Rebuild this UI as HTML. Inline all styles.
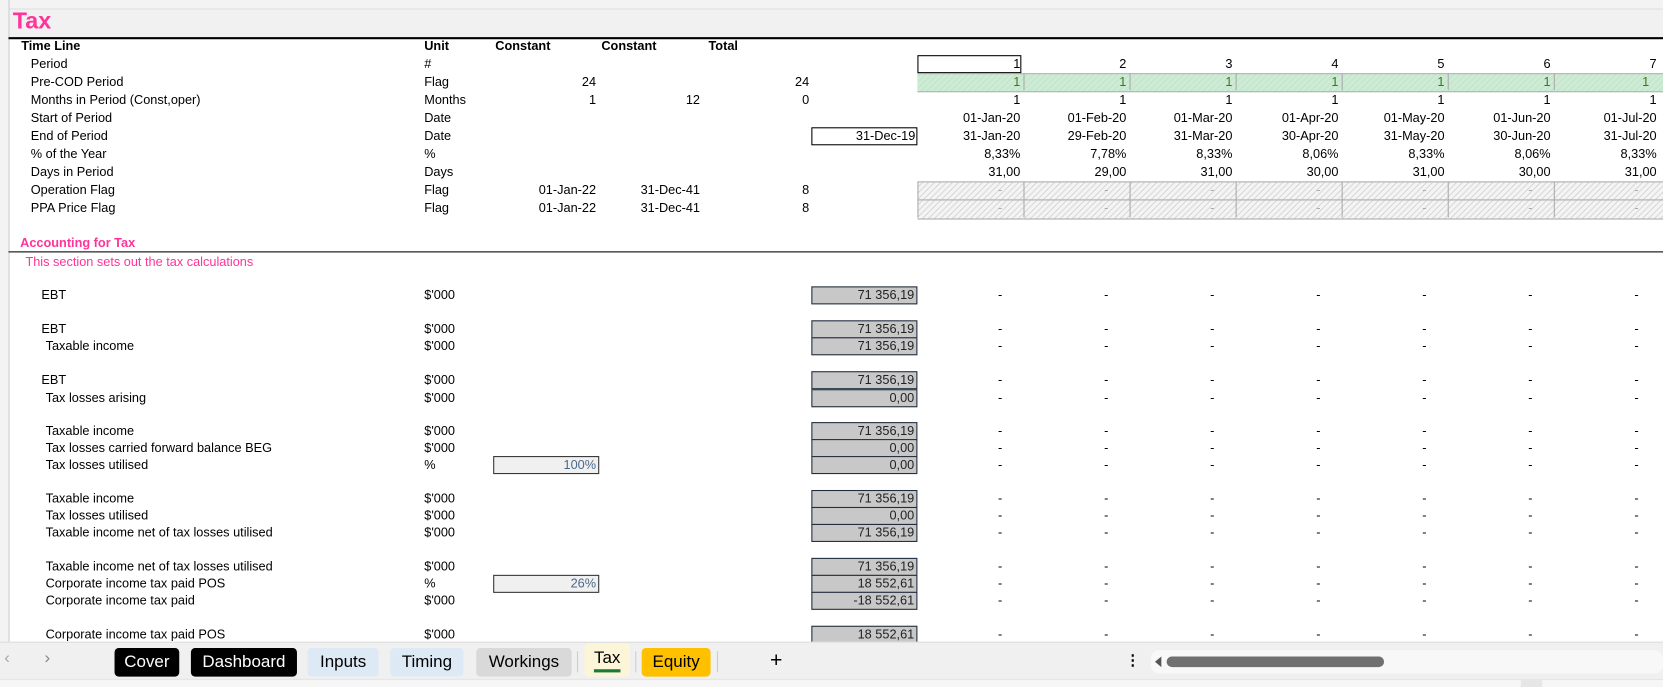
<!DOCTYPE html>
<html><head><meta charset="utf-8"><style>
html,body{margin:0;padding:0;overflow:hidden;width:1663px;height:687px;background:#fff}
#w{position:absolute;left:0;top:0;width:1568px;height:648px;transform:scale(1.06059);transform-origin:0 0;font-family:"Liberation Sans",Arial,sans-serif;font-size:12px;color:#000;overflow:hidden;background:#fff}
.a{position:absolute;white-space:nowrap}
.r{position:absolute;left:0;width:1568px;height:16px;line-height:16px}
.r span{position:absolute;top:0;height:16px;white-space:nowrap}
.l{left:29px}.l2{left:43px}.l1{left:39px}
.u{left:400px}
.c1{left:465px;width:97px;text-align:right}
.c2{left:565px;width:95px;text-align:right}
.t{left:665px;width:98px;text-align:right}
.bx{left:765px;width:96px;text-align:right;padding-right:2px;background:#c8c8c8;border:1px solid #1f2d3d;height:15px!important;line-height:15px;top:0;color:#222}
.ib{left:465px;width:96px;text-align:right;padding-right:2px;background:#f0f0f0;border:1px solid #333;height:15px!important;line-height:15px;color:#4a6a8a}
.p{width:97px;text-align:right}
.d{width:80px;text-align:right}
.pink{color:#ff3399}
</style></head><body><div id="w">
<div class="a" style="left:0;top:0;width:1568px;height:8px;background:#f3f3f3;border-bottom:1px solid #ddd"></div>
<div class="a" style="left:0;top:0;width:8px;height:605px;background:#f3f3f3;border-right:1px solid #ccc"></div>
<div class="a" style="left:9px;top:9px;width:1559px;height:26px;background:#f1f1f1"></div>
<div class="a pink" style="left:12px;top:7px;font-size:22px;font-weight:bold;line-height:26px">Tax</div>
<div class="a" style="left:8px;top:35px;width:1560px;height:2px;background:#000"></div>

<div class="r" style="top:35px;font-weight:bold"><span style="left:20px">Time Line</span><span class="u">Unit</span><span style="left:467px">Constant</span><span style="left:567px">Constant</span><span style="left:668px">Total</span></div>
<div class="r" style="top:52px"><span class="l">Period</span><span class="u">#</span>
<span class="p" style="left:865px;width:97px;border:1px solid #000;height:15px;line-height:15px;top:0;width:96px">1</span><span class="p" style="left:965px">2</span><span class="p" style="left:1065px">3</span><span class="p" style="left:1165px">4</span><span class="p" style="left:1265px">5</span><span class="p" style="left:1365px">6</span><span class="p" style="left:1465px">7</span></div>
<div class="a" style="left:865px;top:69px;width:703px;height:16px;background:repeating-linear-gradient(135deg,#c6e8cf 0 3px,#d4eed9 3px 4px);border-top:1px solid #aaa;border-bottom:1px solid #aaa"></div>
<div class="r" style="top:69px"><span class="l">Pre-COD Period</span><span class="u">Flag</span><span class="c1">24</span><span class="t">24</span>
<span class="p" style="left:865px;color:#3a7a1a;border-right:1px solid #aaa;width:97px;padding-right:3px">1</span><span class="p" style="left:965px;color:#3a7a1a;border-right:1px solid #aaa;width:97px;padding-right:3px">1</span><span class="p" style="left:1065px;color:#3a7a1a;border-right:1px solid #aaa;width:97px;padding-right:3px">1</span><span class="p" style="left:1165px;color:#3a7a1a;border-right:1px solid #aaa;width:97px;padding-right:3px">1</span><span class="p" style="left:1265px;color:#3a7a1a;border-right:1px solid #aaa;width:97px;padding-right:3px">1</span><span class="p" style="left:1365px;color:#3a7a1a;border-right:1px solid #aaa;width:97px;padding-right:3px">1</span><span class="p" style="left:1465px;color:#3a7a1a;width:90px">1</span></div>
<div class="r" style="top:86px"><span class="l">Months in Period (Const,oper)</span><span class="u">Months</span><span class="c1">1</span><span class="c2">12</span><span class="t">0</span>
<span class="p" style="left:865px">1</span><span class="p" style="left:965px">1</span><span class="p" style="left:1065px">1</span><span class="p" style="left:1165px">1</span><span class="p" style="left:1265px">1</span><span class="p" style="left:1365px">1</span><span class="p" style="left:1465px">1</span></div>
<div class="r" style="top:103px"><span class="l">Start of Period</span><span class="u">Date</span>
<span class="p" style="left:865px">01-Jan-20</span><span class="p" style="left:965px">01-Feb-20</span><span class="p" style="left:1065px">01-Mar-20</span><span class="p" style="left:1165px">01-Apr-20</span><span class="p" style="left:1265px">01-May-20</span><span class="p" style="left:1365px">01-Jun-20</span><span class="p" style="left:1465px">01-Jul-20</span></div>
<div class="r" style="top:120px"><span class="l">End of Period</span><span class="u">Date</span><span style="left:765px;width:97px;text-align:right;border:1px solid #000;height:15px;line-height:15px;padding-right:1px">31-Dec-19</span>
<span class="p" style="left:865px">31-Jan-20</span><span class="p" style="left:965px">29-Feb-20</span><span class="p" style="left:1065px">31-Mar-20</span><span class="p" style="left:1165px">30-Apr-20</span><span class="p" style="left:1265px">31-May-20</span><span class="p" style="left:1365px">30-Jun-20</span><span class="p" style="left:1465px">31-Jul-20</span></div>
<div class="r" style="top:137px"><span class="l">% of the Year</span><span class="u">%</span>
<span class="p" style="left:865px">8,33%</span><span class="p" style="left:965px">7,78%</span><span class="p" style="left:1065px">8,33%</span><span class="p" style="left:1165px">8,06%</span><span class="p" style="left:1265px">8,33%</span><span class="p" style="left:1365px">8,06%</span><span class="p" style="left:1465px">8,33%</span></div>
<div class="r" style="top:154px"><span class="l">Days in Period</span><span class="u">Days</span>
<span class="p" style="left:865px">31,00</span><span class="p" style="left:965px">29,00</span><span class="p" style="left:1065px">31,00</span><span class="p" style="left:1165px">30,00</span><span class="p" style="left:1265px">31,00</span><span class="p" style="left:1365px">30,00</span><span class="p" style="left:1465px">31,00</span></div>
<div class="a" style="left:865px;top:171px;width:703px;height:34px;background:repeating-linear-gradient(135deg,#f4f4f4 0 3px,#d8d8d8 3px 4px);border-top:1px solid #aaa;border-bottom:1px solid #aaa"></div>
<div class="a" style="left:865px;top:188px;width:703px;height:1px;background:#aaa"></div>
<div class="a" style="left:965px;top:171px;width:1px;height:34px;background:#aaa"></div><div class="a" style="left:1065px;top:171px;width:1px;height:34px;background:#aaa"></div><div class="a" style="left:1165px;top:171px;width:1px;height:34px;background:#aaa"></div><div class="a" style="left:1265px;top:171px;width:1px;height:34px;background:#aaa"></div><div class="a" style="left:1365px;top:171px;width:1px;height:34px;background:#aaa"></div><div class="a" style="left:1465px;top:171px;width:1px;height:34px;background:#aaa"></div><div class="a" style="left:865px;top:171px;width:1px;height:34px;background:#aaa"></div>
<div class="r" style="top:171px"><span class="l">Operation Flag</span><span class="u">Flag</span><span class="c1">01-Jan-22</span><span class="c2">31-Dec-41</span><span class="t">8</span>
<span class="d" style="left:865px;color:#aaa">-</span><span class="d" style="left:965px;color:#aaa">-</span><span class="d" style="left:1065px;color:#aaa">-</span><span class="d" style="left:1165px;color:#aaa">-</span><span class="d" style="left:1265px;color:#aaa">-</span><span class="d" style="left:1365px;color:#aaa">-</span><span class="d" style="left:1465px;color:#aaa">-</span></div>
<div class="r" style="top:188px"><span class="l">PPA Price Flag</span><span class="u">Flag</span><span class="c1">01-Jan-22</span><span class="c2">31-Dec-41</span><span class="t">8</span>
<span class="d" style="left:865px;color:#aaa">-</span><span class="d" style="left:965px;color:#aaa">-</span><span class="d" style="left:1065px;color:#aaa">-</span><span class="d" style="left:1165px;color:#aaa">-</span><span class="d" style="left:1265px;color:#aaa">-</span><span class="d" style="left:1365px;color:#aaa">-</span><span class="d" style="left:1465px;color:#aaa">-</span></div>

<div class="a pink" style="left:19px;top:222px;font-weight:bold">Accounting for Tax</div>
<div class="a" style="left:8px;top:237px;width:1560px;height:1px;background:#000"></div>
<div class="a pink" style="left:24px;top:240px">This section sets out the tax calculations</div>

<div class="r" style="top:270px"><span class="l1">EBT</span><span class="u">$'000</span><span class="bx">71 356,19</span><span class="d" style="left:865px">-</span><span class="d" style="left:965px">-</span><span class="d" style="left:1065px">-</span><span class="d" style="left:1165px">-</span><span class="d" style="left:1265px">-</span><span class="d" style="left:1365px">-</span><span class="d" style="left:1465px">-</span></div>

<div class="r" style="top:302px"><span class="l1">EBT</span><span class="u">$'000</span><span class="bx">71 356,19</span><span class="d" style="left:865px">-</span><span class="d" style="left:965px">-</span><span class="d" style="left:1065px">-</span><span class="d" style="left:1165px">-</span><span class="d" style="left:1265px">-</span><span class="d" style="left:1365px">-</span><span class="d" style="left:1465px">-</span></div>
<div class="r" style="top:318px"><span class="l2">Taxable income</span><span class="u">$'000</span><span class="bx">71 356,19</span><span class="d" style="left:865px">-</span><span class="d" style="left:965px">-</span><span class="d" style="left:1065px">-</span><span class="d" style="left:1165px">-</span><span class="d" style="left:1265px">-</span><span class="d" style="left:1365px">-</span><span class="d" style="left:1465px">-</span></div>

<div class="r" style="top:350px"><span class="l1">EBT</span><span class="u">$'000</span><span class="bx">71 356,19</span><span class="d" style="left:865px">-</span><span class="d" style="left:965px">-</span><span class="d" style="left:1065px">-</span><span class="d" style="left:1165px">-</span><span class="d" style="left:1265px">-</span><span class="d" style="left:1365px">-</span><span class="d" style="left:1465px">-</span></div>
<div class="r" style="top:367px"><span class="l2">Tax losses arising</span><span class="u">$'000</span><span class="bx">0,00</span><span class="d" style="left:865px">-</span><span class="d" style="left:965px">-</span><span class="d" style="left:1065px">-</span><span class="d" style="left:1165px">-</span><span class="d" style="left:1265px">-</span><span class="d" style="left:1365px">-</span><span class="d" style="left:1465px">-</span></div>

<div class="r" style="top:398px"><span class="l2">Taxable income</span><span class="u">$'000</span><span class="bx">71 356,19</span><span class="d" style="left:865px">-</span><span class="d" style="left:965px">-</span><span class="d" style="left:1065px">-</span><span class="d" style="left:1165px">-</span><span class="d" style="left:1265px">-</span><span class="d" style="left:1365px">-</span><span class="d" style="left:1465px">-</span></div>
<div class="r" style="top:414px"><span class="l2">Tax losses carried forward balance BEG</span><span class="u">$'000</span><span class="bx">0,00</span><span class="d" style="left:865px">-</span><span class="d" style="left:965px">-</span><span class="d" style="left:1065px">-</span><span class="d" style="left:1165px">-</span><span class="d" style="left:1265px">-</span><span class="d" style="left:1365px">-</span><span class="d" style="left:1465px">-</span></div>
<div class="r" style="top:430px"><span class="l2">Tax losses utilised</span><span class="u">%</span><span class="ib">100%</span><span class="bx">0,00</span><span class="d" style="left:865px">-</span><span class="d" style="left:965px">-</span><span class="d" style="left:1065px">-</span><span class="d" style="left:1165px">-</span><span class="d" style="left:1265px">-</span><span class="d" style="left:1365px">-</span><span class="d" style="left:1465px">-</span></div>

<div class="r" style="top:462px"><span class="l2">Taxable income</span><span class="u">$'000</span><span class="bx">71 356,19</span><span class="d" style="left:865px">-</span><span class="d" style="left:965px">-</span><span class="d" style="left:1065px">-</span><span class="d" style="left:1165px">-</span><span class="d" style="left:1265px">-</span><span class="d" style="left:1365px">-</span><span class="d" style="left:1465px">-</span></div>
<div class="r" style="top:478px"><span class="l2">Tax losses utilised</span><span class="u">$'000</span><span class="bx">0,00</span><span class="d" style="left:865px">-</span><span class="d" style="left:965px">-</span><span class="d" style="left:1065px">-</span><span class="d" style="left:1165px">-</span><span class="d" style="left:1265px">-</span><span class="d" style="left:1365px">-</span><span class="d" style="left:1465px">-</span></div>
<div class="r" style="top:494px"><span class="l2">Taxable income net of tax losses utilised</span><span class="u">$'000</span><span class="bx">71 356,19</span><span class="d" style="left:865px">-</span><span class="d" style="left:965px">-</span><span class="d" style="left:1065px">-</span><span class="d" style="left:1165px">-</span><span class="d" style="left:1265px">-</span><span class="d" style="left:1365px">-</span><span class="d" style="left:1465px">-</span></div>

<div class="r" style="top:526px"><span class="l2">Taxable income net of tax losses utilised</span><span class="u">$'000</span><span class="bx">71 356,19</span><span class="d" style="left:865px">-</span><span class="d" style="left:965px">-</span><span class="d" style="left:1065px">-</span><span class="d" style="left:1165px">-</span><span class="d" style="left:1265px">-</span><span class="d" style="left:1365px">-</span><span class="d" style="left:1465px">-</span></div>
<div class="r" style="top:542px"><span class="l2">Corporate income tax paid POS</span><span class="u">%</span><span class="ib">26%</span><span class="bx">18 552,61</span><span class="d" style="left:865px">-</span><span class="d" style="left:965px">-</span><span class="d" style="left:1065px">-</span><span class="d" style="left:1165px">-</span><span class="d" style="left:1265px">-</span><span class="d" style="left:1365px">-</span><span class="d" style="left:1465px">-</span></div>
<div class="r" style="top:558px"><span class="l2">Corporate income tax paid</span><span class="u">$'000</span><span class="bx">-18 552,61</span><span class="d" style="left:865px">-</span><span class="d" style="left:965px">-</span><span class="d" style="left:1065px">-</span><span class="d" style="left:1165px">-</span><span class="d" style="left:1265px">-</span><span class="d" style="left:1365px">-</span><span class="d" style="left:1465px">-</span></div>

<div class="r" style="top:590px"><span class="l2">Corporate income tax paid POS</span><span class="u">$'000</span><span class="bx">18 552,61</span><span class="d" style="left:865px">-</span><span class="d" style="left:965px">-</span><span class="d" style="left:1065px">-</span><span class="d" style="left:1165px">-</span><span class="d" style="left:1265px">-</span><span class="d" style="left:1365px">-</span><span class="d" style="left:1465px">-</span></div>

<!-- tab bar -->
<div class="a" style="left:0;top:605px;width:1568px;height:35px;background:#f0f0f0;border-top:1px solid #ddd"></div>
<div class="a" style="left:0;top:640px;width:1568px;height:8px;background:#f6f6f6;border-top:1px solid #e4e4e4"></div>
<div class="a" style="left:1434px;top:641px;width:20px;height:7px;background:#e6e6e6"></div>
<div class="a" style="left:4px;top:612px;color:#aaa;font-size:16px">&lsaquo;</div>
<div class="a" style="left:42px;top:612px;color:#888;font-size:16px">&rsaquo;</div>
<div class="a" style="left:108px;top:611px;width:61px;height:27px;background:#000;color:#fff;border-radius:4px;font-size:16px;line-height:27px;text-align:center">Cover</div>
<div class="a" style="left:180px;top:611px;width:100px;height:27px;background:#000;color:#fff;border-radius:4px;font-size:16px;line-height:27px;text-align:center">Dashboard</div>
<div class="a" style="left:290px;top:611px;width:67px;height:27px;background:#dde9f5;border-radius:4px;font-size:16px;line-height:27px;text-align:center">Inputs</div>
<div class="a" style="left:368px;top:611px;width:69px;height:27px;background:#dde9f5;border-radius:4px;font-size:16px;line-height:27px;text-align:center">Timing</div>
<div class="a" style="left:449px;top:611px;width:90px;height:27px;background:#d9d9d9;border-radius:4px;font-size:16px;line-height:27px;text-align:center">Workings</div>
<div class="a" style="left:551px;top:607px;width:43px;height:31px;background:#fdf5d8;border-radius:4px;font-size:16px;line-height:28px;text-align:center">Tax</div>
<div class="a" style="left:560px;top:631px;width:25px;height:3px;background:#1e7a3a"></div>
<div class="a" style="left:605px;top:611px;width:65px;height:27px;background:#ffc000;border-radius:4px;font-size:16px;line-height:27px;text-align:center">Equity</div>
<div class="a" style="left:544px;top:614px;width:1px;height:20px;background:#ccc"></div>
<div class="a" style="left:599px;top:614px;width:1px;height:20px;background:#ccc"></div>
<div class="a" style="left:676px;top:614px;width:1px;height:20px;background:#ccc"></div>
<div class="a" style="left:726px;top:611px;font-size:20px;line-height:24px">+</div>
<div class="a" style="left:1061px;top:614px;font-size:14px;font-weight:bold">&#8942;</div>
<div class="a" style="left:1085px;top:613px;width:483px;height:22px;background:#f8f8f8;border-radius:8px"></div>
<div class="a" style="left:1089px;top:619px;width:0;height:0;border-top:5px solid transparent;border-bottom:5px solid transparent;border-right:6px solid #555"></div>
<div class="a" style="left:1100px;top:619px;width:205px;height:10px;background:#707070;border-radius:5px"></div>
</div></body></html>
